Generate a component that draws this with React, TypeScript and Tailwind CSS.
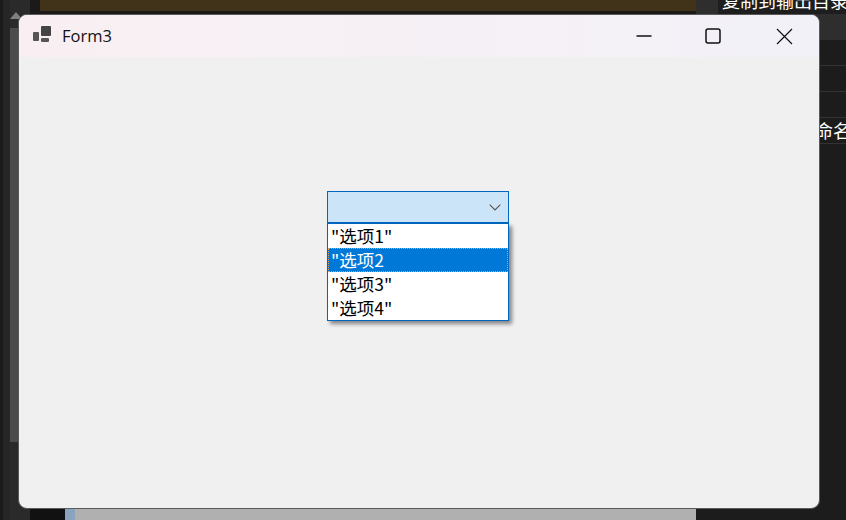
const cjk = "font-['Noto_Sans_CJK_SC','Noto_Sans',sans-serif]";

const options = ['"选项1"', '"选项2', '"选项3"', '"选项4"'];

function AppIcon() {
  return (
    <svg width="20" height="18" viewBox="0 0 20 18" className="shrink-0">
      <rect x="1" y="6" width="6" height="9" rx="1" fill="#555555" />
      <rect x="9" y="0" width="10" height="10" rx="1" fill="#444444" />
      <rect x="9" y="12" width="8" height="4" rx="1" fill="#555555" />
    </svg>
  );
}

function WindowButtons() {
  return (
    <div className="flex items-center">
      <svg width="16" height="16" viewBox="0 0 16 16" className="mr-[53px]">
        <path d="M0.5 8H15.5" stroke="#111" strokeWidth="1.3" fill="none" />
      </svg>
      <svg width="16" height="16" viewBox="0 0 16 16" className="mr-[55px]">
        <rect x="1" y="1" width="14" height="14" rx="2" stroke="#111" strokeWidth="1.5" fill="none" />
      </svg>
      <svg width="17" height="17" viewBox="0 0 17 17" className="mr-[26px]">
        <path d="M1 1L16 16M16 1L1 16" stroke="#111" strokeWidth="1.2" fill="none" />
      </svg>
    </div>
  );
}

function Combo() {
  return (
    <div className="relative w-[182px]">
      <div className="flex h-[32px] items-center justify-end border border-[#0067c0] bg-[#cce4f7] pr-[7px]">
        <svg width="12" height="7" viewBox="0 0 12 7">
          <path d="M0.7 0.7L6 6L11.3 0.7" stroke="#555" strokeWidth="1.1" fill="none" />
        </svg>
      </div>
      {/* dropdown list sits over the form */}
      <ul className={`absolute left-0 top-[32px] w-full border border-[#0067c0] bg-white shadow-[3px_3px_4px_rgba(0,0,0,0.45)] ${cjk}`}>
        {options.map((o, i) => (
          <li
            key={o}
            className={
              i === 1
                ? 'flex h-[24px] items-center whitespace-nowrap border border-dotted border-[#e8a050] bg-[#0078d7] pb-[1px] pl-[2px] text-[17.5px] leading-none text-white'
                : 'flex h-[24px] items-center whitespace-nowrap pb-[1px] pl-[3px] text-[17.5px] leading-none text-black'
            }
          >
            {o}
          </li>
        ))}
      </ul>
    </div>
  );
}

function Backdrop() {
  return (
    <div className="flex h-full w-full">
      <div className="w-[3px] bg-[#1a1a1a]" />
      <div className="w-[7px] bg-[#262626]" />
      <div className="flex w-[20px] flex-col bg-[#2a2a2a] pt-[12px]">
        <div className="h-0 w-0 border-x-[6px] border-b-[7px] border-x-transparent border-b-[#808080]" />
        <div className="mt-[9px] h-[414px] w-[8px] bg-[#4b4b4b]" />
      </div>
      <div className="flex flex-1 flex-col">
        <div className="flex h-[14px]">
          <div className="w-[10px] bg-[#1a1a1a]" />
          <div className="flex-1 border-b-[3px] border-[#1c1a16] bg-[#41331a]" />
        </div>
        <div className="mt-auto flex h-[11px]">
          <div className="w-[35px] bg-[#111111]" />
          <div className="w-[10px] bg-[#8aa3bf]" />
          <div className="flex-1 bg-[#b0b0b0]" />
        </div>
      </div>
      <div className={`flex w-[150px] flex-col ${cjk}`}>
        <div className="flex h-[14px]">
          <div className="w-[22px] bg-[#2e2e2e]" />
          <div className="flex-1 overflow-hidden bg-[#1e1e1e] pl-[4px]">
            <p className="mt-[-12px] whitespace-nowrap text-[18px] leading-[24px] text-white">复制到输出目录</p>
          </div>
        </div>
        <div className="h-[26px] bg-[#2e2e2e]" />
        <div className="h-[26px] border-b border-[#333333]" />
        <div className="h-[26px] border-b border-[#333333]" />
        <div className="h-[26px] border-b border-[#333333]" />
        <div className="h-[26px] overflow-hidden border-b border-[#333333] pl-[119px]">
          <p className="whitespace-nowrap text-[18px] leading-[24px] text-white">命名</p>
        </div>
      </div>
    </div>
  );
}

export default function App() {
  return (
    <div className="relative h-[520px] w-[846px] overflow-hidden bg-[#1c1c1c]">
      <Backdrop />
      <div className="absolute left-[18px] top-[14px] flex h-[495px] w-[802px] flex-col overflow-hidden rounded-[9px] border border-[#5a5a5a] bg-[#f0f0f0]">
        <div className="flex h-[42px] shrink-0 items-center justify-between bg-gradient-to-r from-[#f9eff2] to-[#f2f1f8]">
          <div className="flex items-center">
            <div className="mb-[2px] ml-[13px] mr-[10px] flex">
              <AppIcon />
            </div>
            <span className="font-['Open_Sans',sans-serif] text-[16.5px] text-[#111]">Form3</span>
          </div>
          <WindowButtons />
        </div>
        <div className="flex-1 pl-[308px] pt-[134px]">
          <Combo />
        </div>
      </div>
    </div>
  );
}
